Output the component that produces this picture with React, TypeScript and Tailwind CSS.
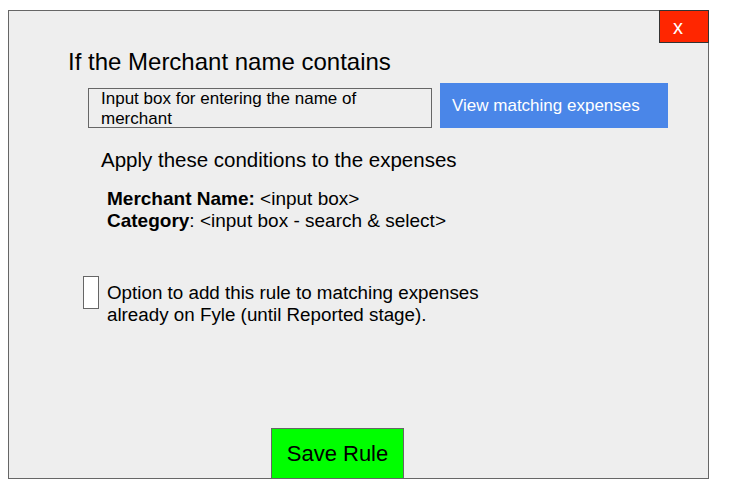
export default function App() {
  return (
    <div className="w-[731px] h-[501px] bg-white pt-[10px] pl-[8px] font-['Liberation_Sans',Arial,sans-serif] text-black">
      <div className="relative flex flex-col w-[701px] h-[469px] border border-[#666666] bg-[#eeeeee]">
        <button className="absolute -top-px -right-px w-[50px] h-[33px] bg-[#ff2600] border border-[#333333] text-white text-[20px] leading-none pr-[12px]">
          x
        </button>

        <h1 className="mt-[38px] ml-[59px] text-[24px] leading-[25px]">If the Merchant name contains</h1>

        <div className="flex items-end gap-[8px] mt-[9px] ml-[79px]">
          <div className="w-[344px] h-[40px] border border-[#666666] pl-[12px] pr-[60px] pt-0 text-[17px] leading-[20px]">
            Input box for entering the name of merchant
          </div>
          <button className="w-[228px] h-[45px] bg-[#4a86e8] text-white text-[17px] text-left pl-[12px] pt-px">
            View matching expenses
          </button>
        </div>

        <p className="mt-[20px] ml-[92px] text-[20.5px] leading-[23px]">Apply these conditions to the expenses</p>

        <div className="mt-[17px] ml-[98px] text-[19px] leading-[22px]">
          <p>
            <span className="font-bold">Merchant Name:</span> &lt;input box&gt;
          </p>
          <p>
            <span className="font-bold">Category</span>: &lt;input box - search &amp; select&gt;
          </p>
        </div>

        <div className="flex items-start gap-[8px] mt-[44px] ml-[74px]">
          <div className="w-[16px] h-[33px] bg-white border border-[#666666] shrink-0" />
          <p className="mt-[6px] text-[18.8px] leading-[22px]">
            Option to add this rule to matching expenses
            <br />
            already on Fyle (until Reported stage).
          </p>
        </div>

        <button className="mt-auto -mb-px ml-[262px] w-[133px] h-[51px] bg-[#00ff00] border border-[#666666] text-[22px]">
          Save Rule
        </button>
      </div>
    </div>
  );
}
